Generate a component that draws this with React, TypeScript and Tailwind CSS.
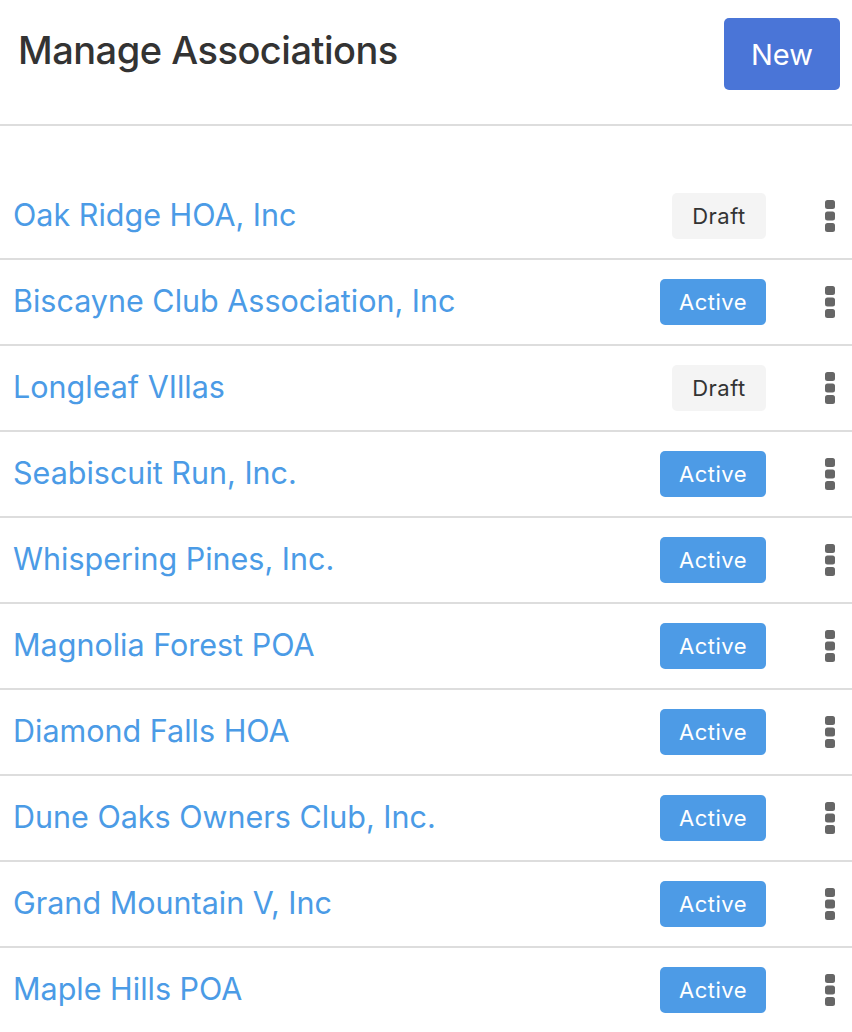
import React from "react";

const rows: { name: string; status: "Draft" | "Active" }[] = [
  { name: "Oak Ridge HOA, Inc", status: "Draft" },
  { name: "Biscayne Club Association, Inc", status: "Active" },
  { name: "Longleaf VIllas", status: "Draft" },
  { name: "Seabiscuit Run, Inc.", status: "Active" },
  { name: "Whispering Pines, Inc.", status: "Active" },
  { name: "Magnolia Forest POA", status: "Active" },
  { name: "Diamond Falls HOA", status: "Active" },
  { name: "Dune Oaks Owners Club, Inc.", status: "Active" },
  { name: "Grand Mountain V, Inc", status: "Active" },
  { name: "Maple Hills POA", status: "Active" },
];

function Kebab() {
  return (
    <svg width="12" height="34" viewBox="0 0 12 34" className="block">
      <rect x="1" y="1" width="10" height="9" rx="2.5" fill="#666" />
      <rect x="1" y="12.5" width="10" height="9" rx="2.5" fill="#666" />
      <rect x="1" y="24" width="10" height="9" rx="2.5" fill="#666" />
    </svg>
  );
}

export default function App() {
  return (
    <div
      className="w-[852px] h-[1032px] overflow-hidden bg-white"
      style={{ fontFamily: "Inter, 'Noto Sans', sans-serif" }}
    >
      <div className="flex items-start justify-between h-[124px] pt-[18px] pl-[18px] pr-[12px]">
        <h1 className="text-[38px] leading-[64px] font-medium text-[#333] tracking-[-0.5px]">
          Manage Associations
        </h1>
        <button className="w-[116px] h-[72px] rounded-[5px] bg-[#4a75d7] text-white text-[29px] pt-[2px]">
          New
        </button>
      </div>
      <div className="h-[2px] bg-[#dddddd]" />
      <div className="pt-[48px]">
        {rows.map((r) => (
          <div
            key={r.name}
            className="flex items-center h-[86px] border-b-2 border-[#dddddd] pl-[13px]"
          >
            <div className="flex-1 text-[#4b9be6] text-[30.5px] pb-[2px]">
              {r.name}
            </div>
            {r.status === "Draft" ? (
              <div className="w-[94px] h-[46px] rounded-[5px] bg-[#f4f4f4] text-[#333] text-[22px] flex items-center justify-center tracking-[0.5px]">
                Draft
              </div>
            ) : (
              <div className="w-[106px] h-[46px] rounded-[5px] bg-[#4d9be6] text-white text-[22px] flex items-center justify-center tracking-[0.5px]">
                Active
              </div>
            )}
            <div className="w-[86px] flex justify-end pr-[16px]">
              <Kebab />
            </div>
          </div>
        ))}
      </div>
    </div>
  );
}
